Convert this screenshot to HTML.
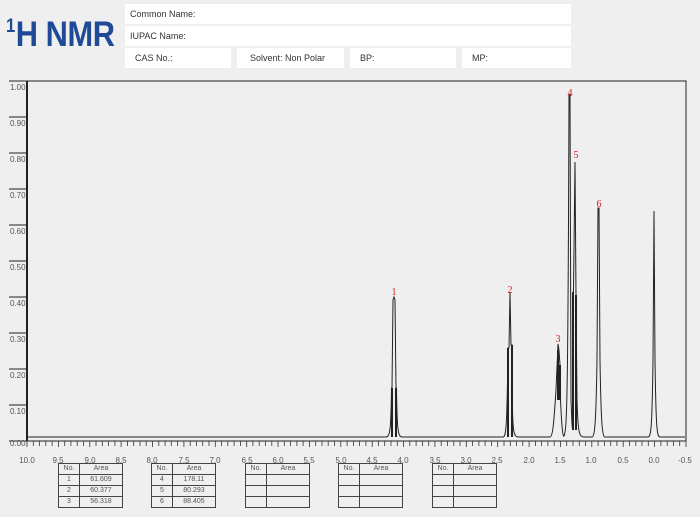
<!DOCTYPE html>
<html><head><meta charset="utf-8"><style>
body{margin:0;width:700px;height:517px;background:#efefef;font-family:"Liberation Sans",sans-serif;position:relative;overflow:hidden}
.t{position:absolute;left:6px;top:15px;color:#1f4a98;font:bold 35px "Liberation Sans Narrow","Liberation Sans",sans-serif;letter-spacing:-0.5px;transform:scaleX(0.88);transform-origin:left}
.t sup{font-size:19px;vertical-align:14px;margin-right:1px}
.b{position:absolute;background:#fff;font-size:9px;color:#333;line-height:20px;padding-left:5px;box-sizing:border-box;height:20px}
table{position:absolute;border-collapse:collapse;font-size:7px;color:#555;background:#efefef}
td{border:1px solid #444;height:10px;padding:0;text-align:center;line-height:10px}
</style></head><body>
<div class="t"><sup>1</sup>H NMR</div>
<div class="b" style="left:125px;top:4px;width:446px">Common Name:</div>
<div class="b" style="left:125px;top:26px;width:446px">IUPAC Name:</div>
<div class="b" style="left:125px;top:48px;width:106px;padding-left:10px">CAS No.:</div>
<div class="b" style="left:237px;top:48px;width:107px;padding-left:13px">Solvent: Non Polar</div>
<div class="b" style="left:350px;top:48px;width:106px;padding-left:10px">BP:</div>
<div class="b" style="left:462px;top:48px;width:109px;padding-left:10px">MP:</div>
<svg width="700" height="517" style="position:absolute;left:0;top:0">
<g stroke="#222" fill="none">
<path d="M27 81 H686 V441 M27 81 V441 H686" stroke-width="1"/>
<path d="M27 81 V441" stroke-width="2"/>
<path d="M9 81H27M9 117H27M9 153H27M9 189H27M9 225H27M9 261H27M9 297H27M9 333H27M9 369H27M9 405H27M9 441H27" stroke-width="1"/>
</g>
<g font-size="8" fill="#555" font-family="Liberation Sans">
<text x="10" y="90">1.00</text><text x="10" y="126">0.90</text><text x="10" y="162">0.80</text><text x="10" y="198">0.70</text><text x="10" y="234">0.60</text><text x="10" y="270">0.50</text><text x="10" y="306">0.40</text><text x="10" y="342">0.30</text><text x="10" y="378">0.20</text><text x="10" y="414">0.10</text><text x="10" y="446">0.00</text>
</g>
<g id="ticks" stroke="#333" stroke-width="0.8"></g>
<g font-size="8" fill="#555" font-family="Liberation Sans" text-anchor="middle">
<text x="27" y="463">10.0</text><text x="58" y="463">9.5</text><text x="90" y="463">9.0</text><text x="121" y="463">8.5</text><text x="152" y="463">8.0</text><text x="184" y="463">7.5</text><text x="215" y="463">7.0</text><text x="247" y="463">6.5</text><text x="278" y="463">6.0</text><text x="309" y="463">5.5</text><text x="341" y="463">5.0</text><text x="372" y="463">4.5</text><text x="403" y="463">4.0</text><text x="435" y="463">3.5</text><text x="466" y="463">3.0</text><text x="497" y="463">2.5</text><text x="529" y="463">2.0</text><text x="560" y="463">1.5</text><text x="591" y="463">1.0</text><text x="623" y="463">0.5</text><text x="654" y="463">0.0</text><text x="685" y="463">-0.5</text>
</g>
<g stroke="#222" fill="none" stroke-width="1">
<path d="M28 437 H386 C390 437 391 430 391.5 388 L392 388 L393 300 L394 297 L395 300 L396 388 L396.5 388 C397 430 398 437 402 437 H503 C506 437 507 430 508 348 L509 348 L510 292 L511 345 L512 345 L512.5 410 C513 432 514 437 518 437 H550 C553 437 554 420 556 390 L558 344 L559 350 L560 365 L560.5 400 C562 432 563 437 564 436 C567 430 568 400 569 95 L570 95 L571 400 C572 425 572 428 573 430 L573.5 290 L575 162 L576 295 L577 400 C578 432 579 437 584 437 H592 C595 437 596 420 597 360 L598 208 L599 208 L600 360 C601 420 602 437 605 437 H648 C651 437 652 430 653 360 L654 211 L655 360 C656 430 657 437 660 437 H685"/>
<path d="M392 388V437M396 388V437M508 348V437M512 345V437M558 350V400M560 365V400M573 292V430M576 295V430" stroke-width="2"/>
</g>
<g font-size="10" fill="#d02020" font-family="Liberation Serif" text-anchor="middle">
<text x="394" y="295">1</text><text x="510" y="293">2</text><text x="558" y="342">3</text><text x="570" y="96">4</text><text x="576" y="158">5</text><text x="599" y="207">6</text>
</g>
</svg>
<script>
var g=document.getElementById('ticks'),s='';
for(var i=0;i<=105;i++){var x=27+i*6.276;s+='M'+x.toFixed(1)+' 441V'+(i%5==0?447:446);}
g.innerHTML='<path d="'+s+'"/>';
</script>
<table style="left:58px;top:463px;width:65px"><tr><td style="width:20px">No.</td><td>Area</td></tr><tr><td>1</td><td>61.609</td></tr><tr><td>2</td><td>60.377</td></tr><tr><td>3</td><td>56.318</td></tr></table>
<table style="left:151px;top:463px;width:65px"><tr><td style="width:20px">No.</td><td>Area</td></tr><tr><td>4</td><td>178.11</td></tr><tr><td>5</td><td>80.293</td></tr><tr><td>6</td><td>88.405</td></tr></table>
<table style="left:245px;top:463px;width:65px"><tr><td style="width:20px">No.</td><td>Area</td></tr><tr><td></td><td></td></tr><tr><td></td><td></td></tr><tr><td></td><td></td></tr></table>
<table style="left:338px;top:463px;width:65px"><tr><td style="width:20px">No.</td><td>Area</td></tr><tr><td></td><td></td></tr><tr><td></td><td></td></tr><tr><td></td><td></td></tr></table>
<table style="left:432px;top:463px;width:65px"><tr><td style="width:20px">No.</td><td>Area</td></tr><tr><td></td><td></td></tr><tr><td></td><td></td></tr><tr><td></td><td></td></tr></table>
</body></html>
